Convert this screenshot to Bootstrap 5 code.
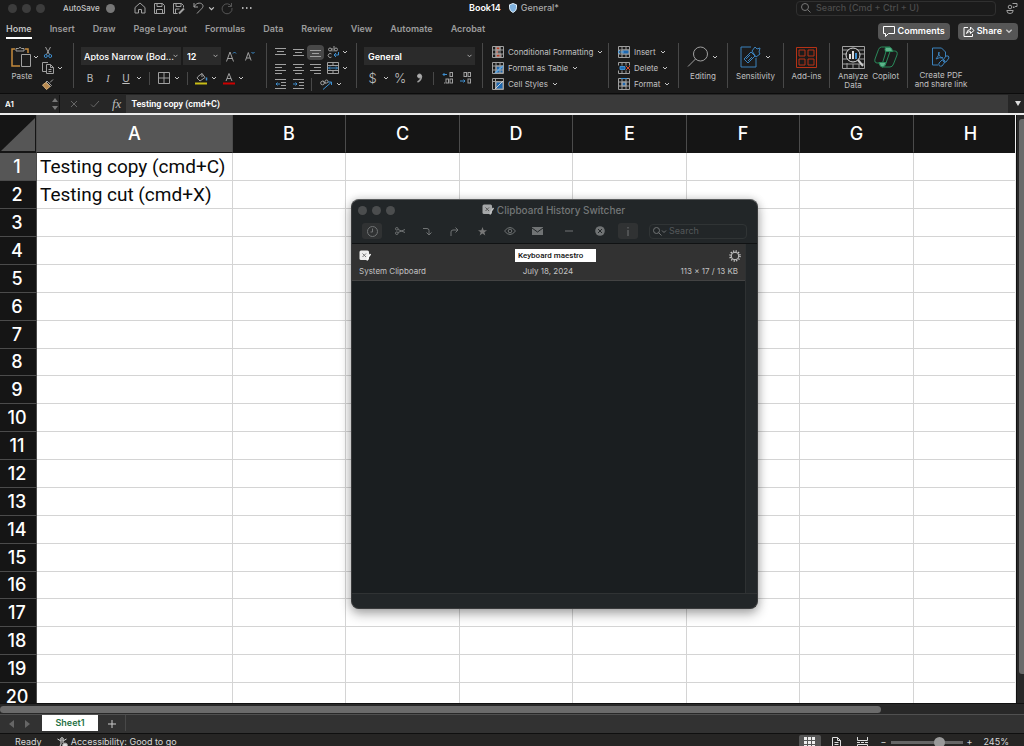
<!DOCTYPE html>
<html lang="en">
<head>
<meta charset="utf-8">
<meta name="viewport" content="width=device-width, initial-scale=1">
<title>Book14</title>
<link href="https://cdn.jsdelivr.net/npm/bootstrap@5.3.0/dist/css/bootstrap.min.css" rel="stylesheet">
<style>
body{font-family:Inter,"Liberation Sans",sans-serif;font-size:9px;line-height:12px;color:#c4c4c4;background:#1b1b1b;height:100vh;overflow:hidden}
svg{display:block;flex:none;fill:none;stroke:#a0a0a0;stroke-width:1;overflow:visible}
button{border:0;background:none;color:inherit;padding:0;display:flex;align-items:center;justify-content:center;line-height:inherit;font:inherit}
a{color:inherit;text-decoration:none}
.lamp{width:9px;height:9px;border-radius:50%;background:#3c3c3c;flex:none}
.titlebar{height:16px}
.titlebar .side{flex:1 1 0}
.find{width:200px;height:15px;border:1px solid #303030;border-radius:4px;padding:0 4px;gap:5px}
.find input,.dlg-find input{background:none;border:0;padding:0;min-width:0;flex:1;color:#666;font-size:9px;line-height:12px}
.find input::placeholder{color:#4c4c4c;opacity:1;font-weight:500}
.tabs{height:26px;padding:0 6px}
.tabs nav{gap:18px;font-weight:600;font-size:9px;color:#9c9c9c;margin-top:2px}
.tabs nav a{height:18px;border-bottom:2px solid transparent;padding-top:2px;white-space:nowrap}
.tabs nav a.active{border-color:#fff;color:#bdbdbd}
.pill{height:17px;background:#565656;border-radius:4px;color:#fff;font-weight:600;font-size:9px;gap:3px;padding:0 5px}
.ribbon{height:52px;border-bottom:1px solid #0c0c0c;font-size:8px;line-height:9px;color:#c0c0c0}
.grp{border-right:1px solid #484848;height:45px;margin-top:1px;flex:none;display:flex}
.grp:last-child{border:0}
.lines{display:flex;flex-direction:column}
.lines>div{height:16px;display:flex;align-items:center;flex:none}
.lines>div:first-child{margin-top:1px}
.w8{width:8px}.w12{width:12px}.w17{width:17px}.w18{width:18px}.w20{width:20px}.w27{width:27px}
.rule{width:1px;height:13px;background:#484848;flex:none}
.pick{height:18px;border:0;border-radius:0;color:#fff;font-weight:600;font-size:9px;padding:0 8px 0 4px;appearance:none;background:#2b2b2b url("data:image/svg+xml,%3Csvg xmlns='http://www.w3.org/2000/svg' width='5' height='4'%3E%3Cpath d='M.5 .8l2 2 2-2' fill='none' stroke='%23aaa'/%3E%3C/svg%3E") no-repeat right 3px center}
.pick.face{font-weight:500;padding:0 6px 0 3px}
.big{flex-direction:column;justify-content:flex-start;text-align:center;padding-top:3px;white-space:nowrap}
.big .pic{height:22px;margin-bottom:4px;display:flex;align-items:center;justify-content:center}
.cmd{gap:4px;white-space:nowrap}
.fbar{height:19px;background:#262626;color:#fff;font-size:8px;font-weight:600}
.fbar .namebox,.fbar .entry{background:transparent;border:0;padding:0 5px;color:#fff;font-weight:600;font-size:8px;height:18px;min-width:0}
.fbar .namebox{width:51px}
.fbar .entry{flex:1;background:#3a3a3a;font-size:9px;font-family:Roboto,"Liberation Sans",sans-serif}
.work{flex:1 1 0;min-height:0;position:relative;border-top:2px solid #ececec;background:#2a2a2a}
.sheet{flex:1 1 0;min-width:0;overflow:hidden;background:#fff;border-right:1px solid #eee}
.cells{table-layout:fixed;width:1028px;border-collapse:separate;border-spacing:0;color:#0a0a0a;font-family:Roboto,"Liberation Sans",sans-serif;font-size:19px;line-height:26px}
.cells td,.cells th{padding:0;border-right:1px solid #d4d4d4;border-bottom:1px solid #d4d4d4;height:28px;overflow:visible;white-space:nowrap}
.cells tbody tr:nth-child(8n) td,.cells tbody tr:nth-child(8n) th{height:27px}
.cells th{background:#151515;color:#fff;text-align:center;font-family:Inter,"Liberation Sans",sans-serif;font-weight:500;font-size:18px;border-color:#4b4b4b}
.cells tbody th{padding-right:2px}
.cells thead th{height:38px;border-bottom-color:#151515}
.cells th.on{background:#565656}
.cells td{padding-left:3px}
.c0{width:37px}.ca{width:196px}.cn{width:113px}.cw{width:114px}
.vbar{width:8px;background:#282828;border-left:1px solid #111;padding:4px 0 29px 2px}
.vbar div{background:#6a6a6a;border-radius:3px 0 0 3px;height:100%}
.hbar{height:11px;background:#282828;border-top:1px solid #111;padding:2px 0}
.hbar div{height:7px;width:86%;background:#6b6b6b;border-radius:4px}
.sheets{height:20px;background:#323232;border-top:1px solid #505050;border-bottom:1px solid #0f0f0f}
.sheets .tabname{width:56px;height:16px;background:#fff;color:#1f7145;font-weight:600;font-size:9px;line-height:16px;text-align:center}
.status{height:12px;background:#262524;color:#d8d8d8;padding:0 15px;overflow:hidden}
.status>div{height:16px}
.slider{width:72px;height:12px;margin:0;appearance:none;background:linear-gradient(#666,#666) center/100% 3px no-repeat}
.slider::-webkit-slider-thumb{appearance:none;width:11px;height:11px;border-radius:50%;background:#999}
.dlg{position:absolute;left:351px;top:84px;width:407px;height:410px;border-radius:8px;background:#222628;border:1px solid #3a3b3c;border-top-color:#5a5c5d;box-shadow:0 5px 12px rgba(0,0,0,.32),0 0 8px rgba(0,0,0,.15);color:#737677;overflow:hidden}
.dlg .lamp{background:#4b4d4e}
.dlg svg{stroke:#707374}
.dlg-title{height:20px;font-size:10px;font-weight:500;padding:0 6px}
.dlg-title .caption{padding-right:39px}
.dlg-tools{height:24px;border-bottom:1px solid #101213;padding:0 10px 1px}
.dlg-tools button{width:20px;height:16px;border-radius:3px}
.dlg-tools button.on{background:#303233}
.dlg-find{width:98px;height:15px;border:1px solid #303435;border-radius:4px;padding:0 3px;gap:3px}
.dlg-find input::placeholder{color:#54585a;opacity:1}
.clip{background:#323232;border-bottom:1px solid #434343;height:37px;padding:4px 4px 0 7px;font-size:8px;color:#c2c2c2}
.clip .row3{display:grid;grid-template-columns:156px 81px 1fr;align-items:center;height:15px;text-align:center}
.snip{background:#fff;color:#111;height:13px;font-weight:500;font-size:8px;line-height:13px;text-align:left;padding-left:3px;font-family:Roboto,"Liberation Sans",sans-serif}
.pane{background:#1a1e20}
.gutter{width:12px;border-left:1px solid #2e3132}
.dlg-foot{height:15px;border-top:1px solid #303334}
</style>
</head>
<body class="d-flex flex-column m-0">
<svg width="0" height="0" class="position-absolute" aria-hidden="true">
 <symbol id="chev" viewBox="0 0 6 6"><path d="M1 2l2 2 2-2" stroke="#c8c8c8"/></symbol>
 <symbol id="grid" viewBox="0 0 12 12"><path d="M.5.5h11v11H.5zM.5 4h11M.5 8h11M4 .5v11M8 .5v11"/></symbol>
 <symbol id="km" viewBox="0 0 12 12"><path d="M2 .5h6.500Q10 .5 10 2v6.500Q10 10 8.500 10H2Q.5 10 .5 8.500V2Q.5 .5 2 .5z" fill="#a5a7a8" stroke="none"/><path d="M8 10.500l1-3L11.500 4" stroke="#c0c2c3" stroke-width="1.500"/><path d="M3.500 3.500l3.500 3.500M7 3.500L3.500 7" stroke="#555"/></symbol>
</svg>

<header class="titlebar d-flex align-items-center flex-shrink-0">
 <div class="side d-flex align-items-center">
  <div class="d-flex ms-2" style="gap:5px"><i class="lamp"></i><i class="lamp"></i><i class="lamp"></i></div>
  <span class="fw-medium" style="margin-left:18px;font-size:8px;width:43px">AutoSave</span>
  <i class="lamp" style="background:#777"></i>
  <div class="d-flex align-items-center" style="margin-left:19px;gap:8px">
   <button aria-label="Home"><svg width="12" height="12"><path d="M1 5.500L6 1l5 4.500V11H7.500V7.500h-3V11H1z"/></svg></button>
   <button aria-label="Save"><svg width="11" height="11"><path d="M.5.5h8l2 2v8H.5zM3 .5v3h5v-3M2.500 10.500v-4h6v4"/></svg></button>
   <button aria-label="Save as"><svg width="12" height="11"><path d="M.5.5h8l2 2v2M.5.5v10h4M3 .5v3h5v-3M2.500 10v-4h4"/><path d="M6 10.500l5-5" stroke-width="2"/></svg></button>
   <button aria-label="Undo"><svg width="11" height="12"><path d="M1 1v4h4M1 5c3-6 9-4 9-1 0 2-2 3-6 7.500"/></svg></button>
   <button aria-label="Undo list" style="margin-left:-4px"><svg width="7" height="7"><use href="#chev"/></svg></button>
   <button aria-label="Redo" style="margin-left:-2px"><svg width="12" height="12" style="stroke:#555"><path d="M10.500 4.500A5 5 0 1 0 11 6M10.500 1v3.500H7"/></svg></button>
   <button aria-label="More"><svg width="11" height="4"><path d="M1 2h1.500M5 2h1.500M9 2h1.500" stroke="#ddd" stroke-width="1.500"/></svg></button>
  </div>
 </div>
 <div class="d-flex align-items-center fw-semibold text-white ms-1"><span class="me-2">Book14</span>
  <svg width="8" height="10"><path d="M4 .5l3.500 1.300v3Q7.500 8 4 9.500.5 8 .5 4.800v-3z" fill="#7fb2df" stroke="#dcecf8"/></svg>
  <span class="fw-medium" style="margin-left:4px;color:#aaa">General*</span></div>
 <div class="side d-flex align-items-center justify-content-end">
  <label class="find d-flex align-items-center"><svg width="10" height="10" style="stroke:#777"><circle cx="4" cy="4" r="3.500"/><path d="M6.500 6.500l3 3"/></svg><input type="text" placeholder="Search (Cmd + Ctrl + U)" aria-label="Search"></label>
  <svg width="12" height="12" style="margin:0 6px 0 10px"><circle cx="4" cy="5" r="1.800"/><path d="M.8 8.500h6.400q0 3-3.200 3t-3.200-3zM6.500 1.500h4.500v3H9L7.500 6V4.500"/></svg>
 </div>
</header>

<div class="tabs d-flex align-items-center justify-content-between flex-shrink-0">
 <nav class="d-flex" aria-label="Ribbon">
  <a href="#" class="active">Home</a><a href="#">Insert</a><a href="#">Draw</a><a href="#">Page Layout</a><a href="#">Formulas</a><a href="#">Data</a><a href="#">Review</a><a href="#">View</a><a href="#">Automate</a><a href="#">Acrobat</a>
 </nav>
 <div class="d-flex gap-2 mt-1">
  <button class="pill"><svg width="12" height="11" style="stroke:#fff"><path d="M.5.5h11v7H5.500l-3 3v-3h-2z"/></svg>Comments</button>
  <button class="pill"><svg width="11" height="11" style="stroke:#fff"><path d="M5 1.500H1v9h8.500V8M3.500 7.500Q4 3.500 7.500 3.500V1L11 4.500 7.500 7.500V5.500Q5 5.500 3.500 7.500z"/></svg>Share<svg width="8" height="8"><use href="#chev"/></svg></button>
 </div>
</div>

<div class="ribbon d-flex flex-shrink-0">
 <div class="grp" style="width:74px">
  <button class="big ms-2" style="width:28px"><span class="pic"><svg width="22" height="22"><path d="M4 3H1v17h8M14 3h3v4" stroke="#c58a3d" stroke-width="1.500"/><path d="M5 5V2.500h2.500Q9 0 10.500 2.500H13V5zM10.500 8.500h9v12h-9z"/></svg></span>Paste</button>
  <svg width="6" height="6" style="margin:11px 0 0 -3px"><use href="#chev"/></svg>
  <div class="lines"><div><button class="w18" aria-label="Cut"><svg width="8" height="11"><path d="M1.500 0l4 7.500M6.500 0l-4 7.500"/><circle cx="1.800" cy="9" r="1.500" stroke="#3e8fd0"/><circle cx="6.200" cy="9" r="1.500" stroke="#3e8fd0"/></svg></button></div>
  <div><button class="w18" aria-label="Copy"><svg width="12" height="12"><path d="M4 9.500H.5v-9H6M4.500 2.500h4l3 3v6h-7zM8.500 2.500v3h3M6.500 7.500h3M6.500 9.500h3"/></svg></button><svg width="6" height="6"><use href="#chev"/></svg></div>
  <div><button class="w18" aria-label="Format painter"><svg width="12" height="11"><path d="M11 .5L8 3.500M5 2l4.500 4.500-1 1L4 3z"/><path d="M4 3.500L.5 6l4 4.500L8 7.500z" fill="#b98a50" stroke="#d8b27c"/></svg></button></div></div>
 </div>

 <div class="grp flex-column" style="width:193px;padding:4px 0 0 7px">
  <div class="d-flex align-items-center" style="height:18px"><select class="pick face" style="width:100px" aria-label="Font"><option>Aptos Narrow (Bod...</option></select><select class="pick" style="width:38px;margin-left:2px" aria-label="Font size"><option>12</option></select>
   <button class="w20" aria-label="Grow font"><svg width="11" height="11"><path d="M.5 10.500L4 1l3.500 9.500M1.700 7.500h4.600"/><path d="M7 2.500L8.500 1 10 2.500" stroke="#3e8fd0"/></svg></button><button class="w18" aria-label="Shrink font"><svg width="10" height="10"><path d="M.5 9.500l2.800-8 2.800 8M1.500 7h3.600"/><path d="M6.500 1L8 2.500 9.500 1" stroke="#3e8fd0"/></svg></button></div>
  <div class="d-flex align-items-center" style="height:20px;margin-top:3px;font-size:10px"><button class="w18">B</button><button class="w18 fst-italic" style="font-family:'Liberation Serif',serif">I</button><button class="w18 text-decoration-underline">U</button><svg width="8" height="6"><use href="#chev"/></svg><i class="rule" style="margin:0 8px 0 6px"></i><button aria-label="Borders"><svg width="12" height="12"><path d="M.5.5h11v11H.5zM.5 6h11M6 .5v11"/></svg></button><svg width="6" height="6" style="margin:0 7px 0 4px"><use href="#chev"/></svg><i class="rule"></i>
   <button style="margin-left:7px" aria-label="Fill colour"><svg width="13" height="13"><path d="M3 4.500l4-3 3 4-5 3.500-3-3zM7 1.500V5"/><path d="M11.500 5.500v3" stroke="#3e8fd0" stroke-width="1.500"/><path d="M0 11.500h12" stroke="#c9bd16" stroke-width="2"/></svg></button><svg width="6" height="6" style="margin:0 3px"><use href="#chev"/></svg>
   <button style="margin-left:3px" aria-label="Font colour"><svg width="12" height="13"><path d="M3 9l3-7.500L9 9M4 6.500h4"/><path d="M0 11.500h12" stroke="#c00" stroke-width="2"/></svg></button><svg width="6" height="6" style="margin-left:3px"><use href="#chev"/></svg></div>
 </div>

 <div class="grp" style="width:90px;padding-left:5px"><div class="lines">
  <div><button class="w17" aria-label="Top align"><svg width="11" height="10"><path d="M0 1.500h11M2 4.500h7M0 7.500h11"/></svg></button><button class="w18" aria-label="Middle align"><svg width="11" height="10"><path d="M0 2.500h11M2 5.500h7M0 8.500h11"/></svg></button><button class="w17 rounded-1" style="background:#484848;height:15px" aria-label="Bottom align"><svg width="11" height="10"><path d="M0 3.500h11M2 6.500h7M0 9.500h11"/></svg></button><button class="w18" aria-label="Wrap"><svg width="11" height="12"><circle cx="2" cy="3.500" r="1.500"/><path d="M4 2v3.500M6 0v5.500M3.500 8a2 2 0 1 0 0 3"/><circle cx="8" cy="3.500" r="1.500"/><path d="M10.500 6v3H6M8 7L6 9l2 2" stroke="#3e8fd0"/></svg></button><svg width="6" height="6"><use href="#chev"/></svg></div>
  <div><button class="w17" aria-label="Left"><svg width="11" height="11"><path d="M0 1.500h11M0 4.500h7M0 7.500h11M0 10.500h7"/></svg></button><button class="w18" aria-label="Center"><svg width="11" height="11"><path d="M0 1.500h11M2 4.500h7M0 7.500h11M2 10.500h7"/></svg></button><button class="w17" aria-label="Right"><svg width="11" height="11"><path d="M0 1.500h11M4 4.500h7M0 7.500h11M4 10.500h7"/></svg></button><button class="w18" aria-label="Merge"><svg width="12" height="12"><path d="M.5 .5h11v11H.5zM.5 3.500h11M.5 8.500h11M6 .5v3M6 8.500v3"/><path d="M1.500 6h9M3 4.500L1.500 6 3 7.500M9 4.500L10.500 6 9 7.500" stroke="#3e8fd0"/></svg></button><svg width="6" height="6"><use href="#chev"/></svg></div>
  <div><button class="w17" aria-label="Outdent"><svg width="11" height="10"><path d="M0 .5h11M6 3.500h5M6 6.500h5M0 9.500h11"/><path d="M5 5H1M2.500 3.500L1 5l1.500 1.500" stroke="#3e8fd0"/></svg></button><button class="w18" aria-label="Indent"><svg width="11" height="10"><path d="M0 .5h11M6 3.500h5M6 6.500h5M0 9.500h11"/><path d="M0 5h4M2.500 3.500L4 5 2.500 6.500" stroke="#3e8fd0"/></svg></button><i class="rule ms-1 me-2"></i><button aria-label="Orientation"><svg width="12" height="11"><circle cx="2.500" cy="4" r="1.800"/><path d="M3 1.500L5.500 5"/><circle cx="6.500" cy="2.500" r="1.500"/><path d="M3 10.500l8-7M8 3h3.500v3" stroke="#3e8fd0"/></svg></button><svg width="6" height="6" class="ms-1"><use href="#chev"/></svg></div>
 </div></div>

 <div class="grp flex-column" style="width:126px;padding:4px 0 0 7px"><select class="pick" style="width:111px" aria-label="Number format"><option>General</option></select>
  <div class="d-flex align-items-center" style="height:20px;margin-top:3px;font-size:13px"><button class="w17 fw-light">$</button><svg width="6" height="6" style="margin:0 5px 0 2px"><use href="#chev"/></svg><button class="w12 fw-light">%</button><button class="w27" aria-label="Comma style"><svg width="7" height="10"><circle cx="3.500" cy="3" r="2" fill="#b0b0b0"/><path d="M5.500 3q0 4-4 6" stroke-width="1.500"/></svg></button><i class="rule"></i><button class="ms-2" aria-label="Increase decimal"><svg width="12" height="12"><path d="M5 2.500H1M2.500 1L1 2.500 2.500 4" stroke="#3e8fd0"/><rect x="8" y=".5" width="2.500" height="4"/><rect x="4" y="7" width="2.500" height="4"/><rect x="8" y="7" width="2.500" height="4"/><path d="M2 11h1"/></svg></button><button style="margin-left:6px" aria-label="Decrease decimal"><svg width="12" height="12"><path d="M0 9h5M3.500 7.500L5 9l-1.500 1.500" stroke="#3e8fd0"/><rect x="4" y=".5" width="2.500" height="4"/><rect x="8" y=".5" width="2.500" height="4"/><rect x="8" y="7" width="2.500" height="4"/></svg></button></div>
 </div>

 <div class="grp" style="width:126px;padding-left:9px"><div class="lines">
  <div><button class="cmd"><svg width="12" height="12"><path d="M4 1h4v3H4zM4 8h5v3H4z" fill="#b93a20"/><path d="M4 4h2v4H4z" fill="#d9482a"/><use href="#grid"/></svg>Conditional Formatting<svg width="6" height="6"><use href="#chev"/></svg></button></div>
  <div><button class="cmd"><svg width="12" height="12"><path d="M4 4h7v7H4z" fill="#1e68b0"/><use href="#grid"/><path d="M3 11l8-7" stroke="#60a8e4" stroke-width="1.500"/></svg>Format as Table<svg width="6" height="6"><use href="#chev"/></svg></button></div>
  <div><button class="cmd"><svg width="12" height="12"><path d="M.5.5h11v11H.5zM.5 3.500h11M3.500 .5v11"/><path d="M4 4h7v7H4z" fill="#1e68b0"/><path d="M3 11l8-8" stroke="#ccc"/></svg>Cell Styles<svg width="6" height="6"><use href="#chev"/></svg></button></div>
 </div></div>
 <div class="grp" style="width:70px;padding-left:9px"><div class="lines">
  <div><button class="cmd"><svg width="12" height="12"><use href="#grid"/><path d="M4 4h7v4H4z" fill="#1e68b0"/><path d="M6 6H0M2 4L0 6l2 2" stroke="#60a8e4"/></svg>Insert<svg width="6" height="6"><use href="#chev"/></svg></button></div>
  <div><button class="cmd"><svg width="12" height="12"><path d="M.5 3.500v-3h11v3M.5 8.500v3h11v-3M4 .5v3M8 .5v3M4 8.500v3M8 8.500v3"/><path d="M2 4.500h5v3H2z" fill="#1e68b0" stroke="#3e8fd0"/><path d="M8 4l4 4M12 4L8 8" stroke="#d34a30"/></svg>Delete<svg width="6" height="6"><use href="#chev"/></svg></button></div>
  <div><button class="cmd"><svg width="12" height="12"><path d="M4 4h4v4H4z" fill="#1e68b0"/><use href="#grid"/><path d="M3 .5h6" stroke="#3e8fd0"/></svg>Format<svg width="6" height="6"><use href="#chev"/></svg></button></div>
 </div></div>

 <div class="grp justify-content-center" style="width:49px"><button class="big"><span class="pic"><svg width="20" height="22"><circle cx="12.500" cy="8" r="7"/><path d="M7.500 13L0 20.500"/></svg><svg width="6" height="6" class="ms-1"><use href="#chev"/></svg></span>Editing</button></div>
 <div class="grp justify-content-center" style="width:56px"><button class="big"><span class="pic"><svg width="21" height="22" style="stroke:#3b82bd"><path d="M11 1H1v20h15v-9"/><path d="M4 13l7-7 4 4-7 7zM6 13l4-4M8 15l4-4M12 5l3-4 2 2 3-1-1 4 1 2-4 3z"/></svg><svg width="6" height="6" class="ms-1"><use href="#chev"/></svg></span>Sensitivity</button></div>
 <div class="grp justify-content-center" style="width:46px"><button class="big"><span class="pic"><svg width="21" height="21" style="stroke:#b63216"><path d="M.5.5h20v20H.5zM3 3h6v6H3zM12 3h6v6h-6zM3 12h6v6H3zM12 12h6v6h-6z"/></svg></span>Add-ins</button></div>
 <div class="grp justify-content-center" style="width:78px;gap:4px"><button class="big"><span class="pic"><svg width="23" height="23"><path d="M.5.500h22v22H.5zM.5 4h22M.5 8h5M.5 13h5M.5 18h22M17 8h5M17 13h5M5 17v5M11 18v4M17 18v4"/><circle cx="11" cy="9" r="7" fill="#202020" stroke="#ddd"/><path d="M16 14l5 6" stroke="#ccc" stroke-width="2"/><path d="M8 8v5M11 5v8" stroke="#ddd" stroke-width="2"/><path d="M14 7v6" stroke="#3e8fd0" stroke-width="2"/></svg></span>Analyze<br>Data</button>
  <button class="big"><span class="pic"><svg width="24" height="22" style="stroke:#2a8a5a"><path d="M16 1H7.500Q5.500 1 4.500 3.500L1 13q-1 4 2.500 4H7M8 21h8q2.500 0 3.500-3l3.500-9q1-4-2.500-4H18"/><path d="M12 5.500L8.500 17M16 5.500L12 17q-1 4-4 4"/><path d="M11.500 1.500H16q2 0 2.500 4h-7q-1-2 0-4zM5 16.500h7q-1 4.500-4 4.500-2 0-3-4.500z" fill="#5fb48c"/></svg></span>Copilot</button></div>
 <div class="grp justify-content-center" style="width:66px"><button class="big"><span class="pic"><svg width="20" height="21" style="stroke:#3b82bd"><path d="M7 19H1.500v-17h9l4 4v5M5 13q3-3 3-7-1 5 4 6-4-1-7 1z"/><path d="M8 17l3-3q3-1 3 2l-3 4q-4 1-3-3zM12 14l3-4q3-1 3 2l-3 4q-3 1-3-2z"/></svg></span>Create PDF<br>and share link</button></div>
</div>

<div class="fbar d-flex align-items-center flex-shrink-0">
 <input class="namebox" value="A1" aria-label="Name box"><svg width="8" height="14"><path d="M1 5l3-4 3 4zM1 9l3 4 3-4z" fill="#777" stroke="none"/></svg>
 <i class="rule" style="height:18px;background:#111"></i>
 <button aria-label="Cancel" style="margin-left:10px"><svg width="8" height="8" style="stroke:#666"><path d="M1 1l6 6M7 1L1 7"/></svg></button>
 <button aria-label="Enter" style="margin-left:12px"><svg width="10" height="8" style="stroke:#666"><path d="M1 4.500L3.500 7 9 1"/></svg></button>
 <button class="fst-italic fw-normal" style="margin:0 5px 0 12px;font:italic 13px/16px 'Liberation Serif',serif;color:#bbb">fx</button>
 <input class="entry" value="Testing copy (cmd+C)" aria-label="Formula bar">
 <svg width="8" height="8" style="margin:0 2px 0 6px"><path d="M1 1h6L4 6z" fill="#ddd" stroke="none"/></svg>
</div>

<main class="work d-flex">
 <div class="sheet">
  <table class="cells"><colgroup><col class="c0"><col class="ca"><col class="cn"><col class="cw"><col class="cn"><col class="cw"><col class="cn"><col class="cw"><col class="cw"></colgroup>
   <thead><tr><th aria-label="Select all"><svg width="36" height="37"><path d="M1 36L35 3v33z" fill="#565656" stroke="none"/></svg></th><th class="on">A</th><th>B</th><th>C</th><th>D</th><th>E</th><th>F</th><th>G</th><th>H</th></tr></thead>
   <tbody id="rows"></tbody></table>
 </div>
 <div class="vbar"><div></div></div>

 <section class="dlg d-flex flex-column" aria-label="Clipboard History Switcher">
  <div class="dlg-title d-flex align-items-center flex-shrink-0"><div class="d-flex" style="gap:5px"><i class="lamp"></i><i class="lamp"></i><i class="lamp"></i></div>
   <div class="caption d-flex align-items-center justify-content-center flex-grow-1" style="gap:3px"><svg width="12" height="12"><use href="#km"/></svg><span>Clipboard History Switcher</span></div></div>
  <div class="dlg-tools d-flex align-items-center justify-content-between flex-shrink-0">
   <button class="on" aria-label="History"><svg width="11" height="11"><circle cx="5.500" cy="5.500" r="5"/><path d="M5.500 2.500v3.500H3.500"/></svg></button>
   <button aria-label="Cut"><svg width="10" height="8"><path d="M3 2.500l7 3M3 5.500l7-3"/><circle cx="1.800" cy="1.800" r="1.300"/><circle cx="1.800" cy="6.200" r="1.300"/></svg></button>
   <button aria-label="Paste down"><svg width="9" height="9"><path d="M0 1.500h4q2 0 2 2V8M3.500 5.500L6 8l2.500-2.500"/></svg></button>
   <button aria-label="Paste up"><svg width="9" height="9"><path d="M1 9V5q0-2 2-2h5M5.500.500L8 3 5.500 5.500"/></svg></button>
   <button aria-label="Favourite"><svg width="9" height="9"><path d="M4.500 0l1.200 3.200H9L6.400 5.200l.9 3.400-2.800-2-2.800 2 .9-3.400L0 3.200h3.300z" fill="#777" stroke="none"/></svg></button>
   <button aria-label="Preview"><svg width="12" height="8"><path d="M.5 4Q6-3 11.500 4 6 11 .5 4z"/><circle cx="6" cy="4" r="1.800"/></svg></button>
   <button aria-label="Mail"><svg width="11" height="8"><path d="M0 0h11v8H0z" fill="#707374" stroke="none"/><path d="M0 1l5.500 4L11 1" stroke="#222628"/></svg></button>
   <button class="mx-1" aria-label="Remove"><svg width="8" height="2"><path d="M0 1h8"/></svg></button>
   <button aria-label="Clear"><svg width="10" height="10"><circle cx="5" cy="5" r="4.800" fill="#707374" stroke="none"/><path d="M3 3l4 4M7 3L3 7" stroke="#222628"/></svg></button>
   <button class="on" aria-label="Info"><svg width="4" height="9"><path d="M2 3v6M2 0v1.500"/></svg></button>
   <label class="dlg-find d-flex align-items-center ms-1"><svg width="13" height="9"><circle cx="3.500" cy="3.500" r="3"/><path d="M5.500 5.500l3 3M9 3.500l2 2 2-2"/></svg><input type="text" placeholder="Search" aria-label="Search clipboard"></label>
  </div>
  <div class="d-flex flex-grow-1">
   <div class="pane flex-grow-1"><div class="clip">
    <div class="row3"><svg width="12" height="12"><path d="M2 .5h6.500Q10 .5 10 2v6.500Q10 10 8.500 10H2Q.5 10 .5 8.500V2Q.5 .5 2 .5z" fill="#eee" stroke="none"/><path d="M8 10.500l1-3L11.500 4" stroke="#fff" stroke-width="1.500"/><path d="M3.500 3.500l3.500 3.500M7 3.500L3.500 7" stroke="#777"/></svg><div class="snip">Keyboard maestro</div><svg width="12" height="12" class="ms-auto"><circle cx="6" cy="6" r="3.800" stroke="#ccc"/><circle cx="6" cy="6" r="5" stroke="#ccc" stroke-width="1.500" stroke-dasharray="1.200 1.420"/></svg></div>
    <div class="row3"><span class="text-start">System Clipboard</span><span style="margin-right:15px">July 18, 2024</span><span class="text-end" style="padding-right:3px">113 × 17 / 13 KB</span></div>
   </div></div>
   <div class="gutter"></div>
  </div>
  <div class="dlg-foot flex-shrink-0"></div>
 </section>
</main>
<div class="hbar flex-shrink-0"><div></div></div>
<div class="sheets d-flex flex-shrink-0">
 <div class="d-flex align-items-center" style="width:42px;padding-left:8px;gap:9px"><svg width="7" height="8"><path d="M6 0v8L1 4z" fill="#666" stroke="none"/></svg><svg width="7" height="8"><path d="M1 0v8l5-4z" fill="#666" stroke="none"/></svg></div>
 <a href="#" class="tabname">Sheet1</a>
 <button style="width:27px" aria-label="Add sheet"><svg width="8" height="8"><path d="M4 0v8M0 4h8" stroke="#ccc"/></svg></button><i class="rule" style="height:16px"></i>
</div>
<footer class="status flex-shrink-0"><div class="d-flex align-items-center">
 <span>Ready</span><svg width="11" height="11" style="margin:0 3px 0 15px"><circle cx="5" cy="2" r="1.300" stroke="#ddd"/><path d="M.5 2L4 4v3l-2 4M9.500 2L6 4v2" stroke="#ddd"/><circle cx="8" cy="8.500" r="2.500" fill="#ddd"/></svg><span>Accessibility: Good to go</span>
 <div class="d-flex align-items-center ms-auto">
  <button style="width:22px;height:14px;background:#555;border-radius:2px" aria-label="Normal view"><svg width="11" height="11" style="stroke:#555"><path d="M0 0h11v11H0z" fill="#eee" stroke="none"/><path d="M0 3.500h11M0 7.500h11M3.500 0v11M7.500 0v11"/></svg></button>
  <button style="margin-left:11px" aria-label="Page layout view"><svg width="9" height="11" style="stroke:#ddd"><path d="M.5.5h5l3 3v7H.5zM5.500.5v3h3M2.500 5.500h4M2.500 7.500h4"/></svg></button>
  <button style="margin:0 13px 0 16px" aria-label="Page break view"><svg width="11" height="11" style="stroke:#ddd"><path d="M.5 0v3.500h10V0M.5 11V7.500h10V11M0 5.500h3M4 5.500h3M8 5.500h3"/></svg></button>
  <span>−</span><input type="range" class="slider mx-1" min="0" max="100" value="72" aria-label="Zoom"><span>+</span><span style="margin-left:11px">245%</span>
 </div></div></footer>
<script>
const text={1:'Testing copy (cmd+C)',2:'Testing cut (cmd+X)'};
let html='';
for(let r=1;r<=20;r++)html+='<tr><th'+(r===1?' class="on"':'')+'>'+r+'</th><td>'+(text[r]||'')+'</td>'+'<td></td>'.repeat(7)+'</tr>';
document.getElementById('rows').innerHTML=html;
</script>
<script src="https://cdn.jsdelivr.net/npm/bootstrap@5.3.0/dist/js/bootstrap.bundle.min.js"></script>
</body>
</html>
